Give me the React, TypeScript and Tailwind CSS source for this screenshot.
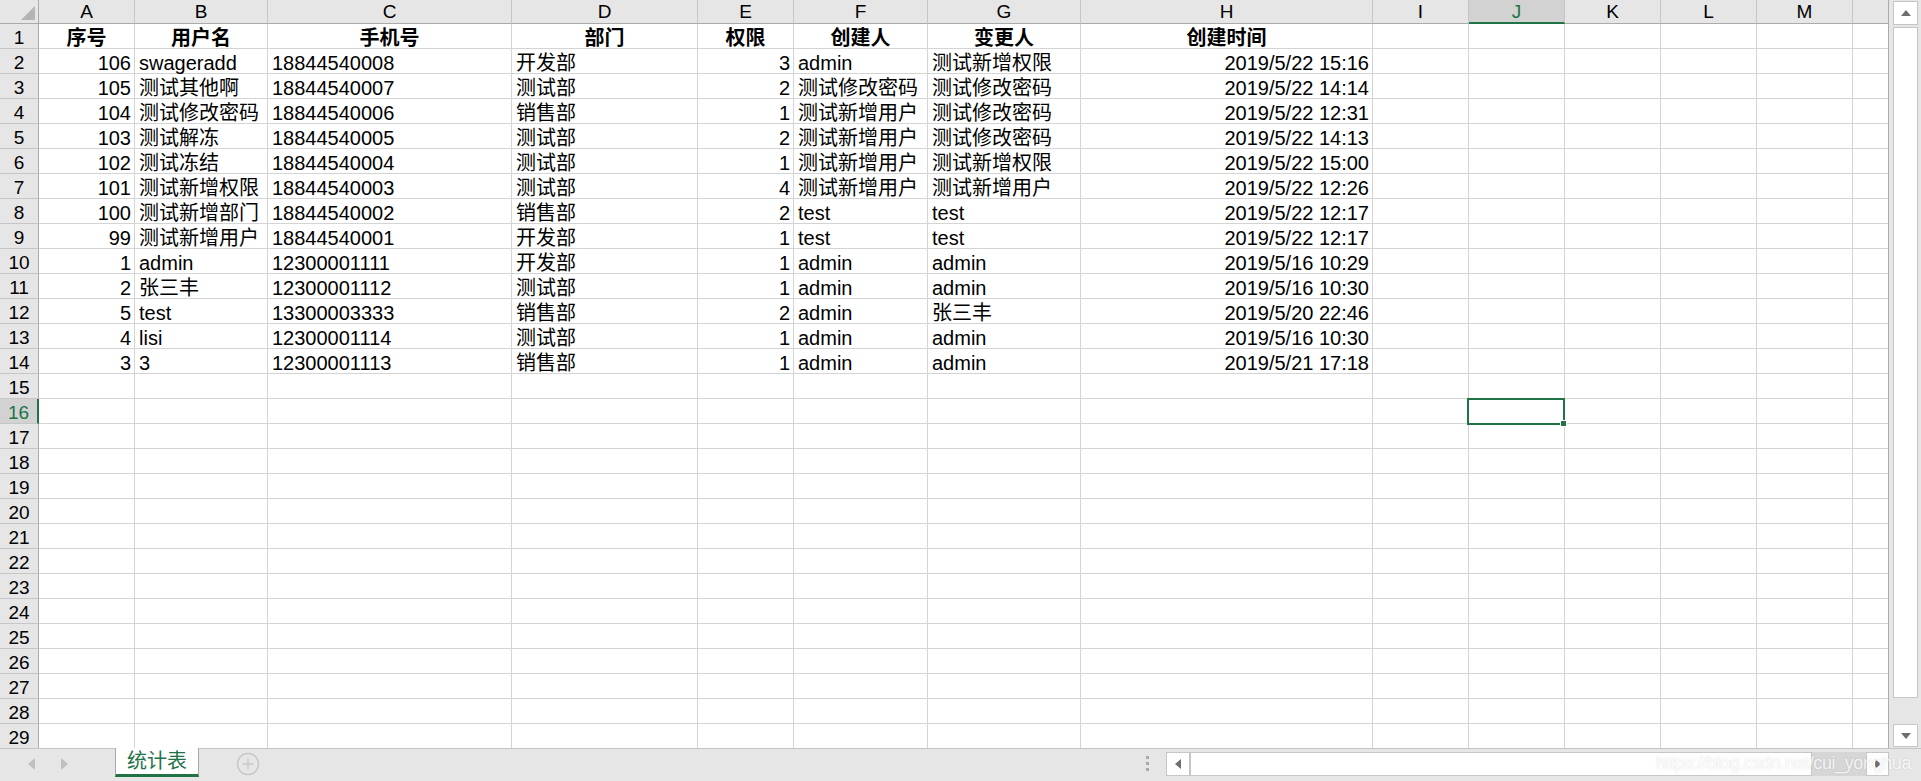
import React from 'react';

const FONT = { fontFamily: '"Liberation Sans", "Noto Sans CJK SC", Arial, sans-serif' };

const COLS = ['A', 'B', 'C', 'D', 'E', 'F', 'G', 'H', 'I', 'J', 'K', 'L', 'M', ''];

// numeric columns are right aligned, like Excel does
const RIGHT = [true, false, false, false, true, false, false, true];

const HEADERS = ['序号', '用户名', '手机号', '部门', '权限', '创建人', '变更人', '创建时间'];

const ROWS: string[][] = [
  ['106', 'swageradd', '18844540008', '开发部', '3', 'admin', '测试新增权限', '2019/5/22 15:16'],
  ['105', '测试其他啊', '18844540007', '测试部', '2', '测试修改密码', '测试修改密码', '2019/5/22 14:14'],
  ['104', '测试修改密码', '18844540006', '销售部', '1', '测试新增用户', '测试修改密码', '2019/5/22 12:31'],
  ['103', '测试解冻', '18844540005', '测试部', '2', '测试新增用户', '测试修改密码', '2019/5/22 14:13'],
  ['102', '测试冻结', '18844540004', '测试部', '1', '测试新增用户', '测试新增权限', '2019/5/22 15:00'],
  ['101', '测试新增权限', '18844540003', '测试部', '4', '测试新增用户', '测试新增用户', '2019/5/22 12:26'],
  ['100', '测试新增部门', '18844540002', '销售部', '2', 'test', 'test', '2019/5/22 12:17'],
  ['99', '测试新增用户', '18844540001', '开发部', '1', 'test', 'test', '2019/5/22 12:17'],
  ['1', 'admin', '12300001111', '开发部', '1', 'admin', 'admin', '2019/5/16 10:29'],
  ['2', '张三丰', '12300001112', '测试部', '1', 'admin', 'admin', '2019/5/16 10:30'],
  ['5', 'test', '13300003333', '销售部', '2', 'admin', '张三丰', '2019/5/20 22:46'],
  ['4', 'lisi', '12300001114', '测试部', '1', 'admin', 'admin', '2019/5/16 10:30'],
  ['3', '3', '12300001113', '销售部', '1', 'admin', 'admin', '2019/5/21 17:18'],
];

const TOTAL_ROWS = 29;

function ColumnHeader({ label }: { label: string }) {
  const active = label === 'J';
  return (
    <div
      className={
        active
          ? 'h-[24px] flex items-center justify-center bg-[#d2d2d2] border-r border-[#c6c6c6] border-b-2 border-b-[#217346] text-[#217346] text-[19px] leading-none'
          : 'h-[24px] flex items-center justify-center bg-[#e6e6e6] border-r border-[#c6c6c6] border-b border-b-[#ababab] text-black text-[19px] leading-none'
      }
    >
      {label}
    </div>
  );
}

function RowHeader({ n }: { n: number }) {
  const active = n === 16;
  return (
    <div
      className={
        active
          ? 'h-[25px] flex items-center justify-center pt-[2px] bg-[#d2d2d2] border-b border-[#c6c6c6] border-r-2 border-r-[#217346] text-[#217346] text-[19px] leading-none'
          : 'h-[25px] flex items-center justify-center pt-[2px] bg-[#e6e6e6] border-b border-[#c6c6c6] border-r border-r-[#ababab] text-black text-[19px] leading-none'
      }
    >
      {n}
    </div>
  );
}

function Cell({ text, align, bold, selected }: { text?: string; align: 'left' | 'right' | 'center'; bold?: boolean; selected?: boolean }) {
  const justify = align === 'right' ? 'justify-end pr-[3px]' : align === 'center' ? 'justify-center' : 'justify-start pl-[4px]';
  return (
    <div className={`relative h-[25px] flex items-end ${justify} bg-white border-r border-b border-[#d4d4d4] overflow-visible`}>
      {text && (
        <span className={`whitespace-nowrap text-[20px] leading-[20px] text-black ${bold ? 'font-bold' : ''}`}>{text}</span>
      )}
      {selected && (
        <div className="absolute left-[-2px] top-[-1px] w-[98px] h-[27px] border-2 border-[#217346] z-10">
          <div className="absolute right-[-4px] bottom-[-4px] w-[7px] h-[7px] bg-[#217346] border border-white" />
        </div>
      )}
    </div>
  );
}

function Grid() {
  const rows = [];
  for (let r = 1; r <= TOTAL_ROWS; r++) {
    const data = r === 1 ? HEADERS : ROWS[r - 2];
    rows.push(<RowHeader key={`h${r}`} n={r} />);
    for (let c = 0; c < COLS.length; c++) {
      const text = data && c < 8 ? data[c] : undefined;
      const align = r === 1 ? 'center' : c < 8 && RIGHT[c] ? 'right' : 'left';
      rows.push(
        <Cell key={`${r}-${c}`} text={text} align={align} bold={r === 1} selected={r === 16 && c === 9} />
      );
    }
  }

  return (
    <div className="w-[1889px] h-[748px] overflow-hidden border-r border-[#ababab]">
      <div className="grid grid-cols-[39px_96px_133px_244px_186px_96px_134px_153px_292px_96px_96px_96px_96px_96px_36px]">
        <div className="relative h-[24px] bg-[#e6e6e6] border-r border-b border-[#ababab]">
          <svg className="absolute right-[3px] bottom-[3px]" width="14" height="14" viewBox="0 0 14 14">
            <polygon points="14,0 14,14 0,14" fill="#b4b4b4" />
          </svg>
        </div>
        {COLS.map((c, i) => (
          <ColumnHeader key={i} label={c} />
        ))}
        {rows}
      </div>
    </div>
  );
}

function VerticalScroll() {
  return (
    <div className="w-[32px] h-[748px] bg-[#e6e6e6] flex flex-col items-center pt-[1px] pl-[1px]">
      <div className="w-[25px] h-[24px] bg-white border border-[#c6c6c6] flex items-center justify-center">
        <svg width="10" height="6" viewBox="0 0 10 6">
          <polygon points="5,0 10,6 0,6" fill="#6e6e6e" />
        </svg>
      </div>
      <div className="mt-[2px] w-[25px] h-[671px] bg-white border border-[#c6c6c6]" />
      <div className="flex-1" />
      <div className="w-[25px] h-[23px] mb-[1px] bg-white border border-[#c6c6c6] flex items-center justify-center">
        <svg width="10" height="6" viewBox="0 0 10 6">
          <polygon points="0,0 10,0 5,6" fill="#6e6e6e" />
        </svg>
      </div>
    </div>
  );
}

function BottomBar() {
  return (
    <div className="relative h-[33px] bg-[#e6e6e6] border-t border-[#c6c6c6] flex items-start">
      <div className="w-[115px] h-[29px] flex items-center gap-[24px] pl-[28px]">
        <svg width="8" height="12" viewBox="0 0 8 12">
          <polygon points="7,0 7,12 0,6" fill="#c0c0c0" />
        </svg>
        <svg width="8" height="12" viewBox="0 0 8 12">
          <polygon points="1,0 1,12 8,6" fill="#c0c0c0" />
        </svg>
      </div>
      <div className="mt-[-1px] w-[84px] h-[29px] bg-white border-x border-[#a8a8a8] border-b-[3px] border-b-[#217346] flex items-center justify-center text-[20px] text-[#217346] leading-none">
        统计表
      </div>
      <div className="w-[98px] h-[29px] flex items-center justify-center">
        <svg width="24" height="24" viewBox="0 0 24 24">
          <circle cx="12" cy="12" r="10.5" fill="none" stroke="#c8c8c8" strokeWidth="1.5" />
          <line x1="12" y1="6.5" x2="12" y2="17.5" stroke="#c8c8c8" strokeWidth="1.5" />
          <line x1="6.5" y1="12" x2="17.5" y2="12" stroke="#c8c8c8" strokeWidth="1.5" />
        </svg>
      </div>
      <div className="flex-1" />
      <div className="h-[29px] flex items-center mr-[17px]">
        <div className="flex flex-col gap-[3px]">
          <div className="w-[3px] h-[3px] bg-[#a8a8a8]" />
          <div className="w-[3px] h-[3px] bg-[#a8a8a8]" />
          <div className="w-[3px] h-[3px] bg-[#a8a8a8]" />
        </div>
      </div>
      <div className="mt-[3px] flex h-[24px]">
        <div className="w-[24px] h-[24px] bg-white border border-[#c6c6c6] flex items-center justify-center">
          <svg width="6" height="10" viewBox="0 0 6 10">
            <polygon points="6,0 6,10 0,5" fill="#6e6e6e" />
          </svg>
        </div>
        <div className="w-[622px] h-[24px] bg-white border border-[#c6c6c6]" />
        <div className="w-[54px] h-[24px] bg-[#d6d6d6]" />
        <div className="w-[23px] h-[24px] bg-white border border-[#c6c6c6] flex items-center justify-center">
          <svg width="6" height="10" viewBox="0 0 6 10">
            <polygon points="0,0 0,10 6,5" fill="#6e6e6e" />
          </svg>
        </div>
      </div>
      <div className="w-[32px]" />
      <div className="absolute right-[10px] top-[4px] text-[18px] leading-[20px] text-white/80 whitespace-nowrap tracking-[-0.4px] [text-shadow:0_0_2px_rgba(0,0,0,0.15)]">
        https://blog.csdn.net/cui_yonghua
      </div>
    </div>
  );
}

export default function App() {
  return (
    <div className="w-[1921px] h-[781px] overflow-hidden bg-[#e6e6e6] flex flex-col" style={FONT}>
      <div className="flex">
        <Grid />
        <VerticalScroll />
      </div>
      <BottomBar />
    </div>
  );
}
